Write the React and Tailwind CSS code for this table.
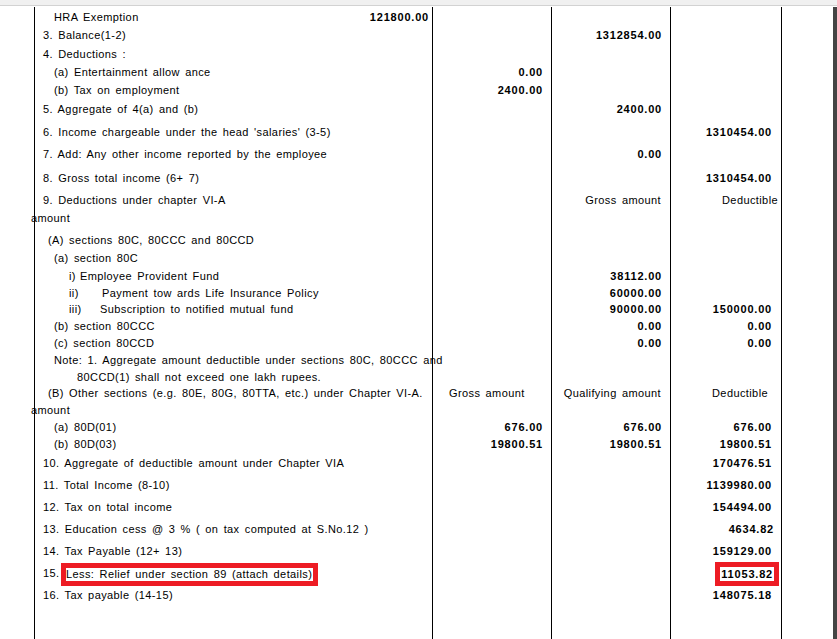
import React from 'react';

// left margin | label | col B | col C | col D | spare
const GRID = 'grid grid-cols-[34px_398px_119px_119px_111px_52px]';

const H = {
  16: 'h-[16px]',
  17: 'h-[17px]',
  18: 'h-[18px]',
  19: 'h-[19px]',
  22: 'h-[22px]',
  23: 'h-[23px]',
  24: 'h-[24px]',
};

// label start positions
const IND = {
  n: 'pl-[8px]', // numbered items
  s: 'pl-[13px]', // (A) / (B)
  a: 'pl-[19px]', // (a) (b) ...
  r: 'pl-[34px]', // roman sub items
  w: 'pl-[42px]', // note wrap line
  o: '-ml-[4px]', // "amount" spill-over
};

const rows = [
  { h: 18, label: 'HRA Exemption', ind: 'a', inl: '121800.00' },
  { h: 19, label: '3. Balance(1-2)', ind: 'n', c: '1312854.00' },
  { h: 18, label: '4. Deductions :', ind: 'n' },
  { h: 18, label: '(a) Entertainment allow ance', ind: 'a', b: '0.00' },
  { h: 19, label: '(b) Tax on employment', ind: 'a', b: '2400.00' },
  { h: 23, label: '5. Aggregate of 4(a) and (b)', ind: 'n', c: '2400.00' },
  { h: 22, label: "6. Income chargeable under the head 'salaries' (3-5)", ind: 'n', d: '1310454.00' },
  { h: 24, label: '7. Add: Any other income reported by the employee', ind: 'n', c: '0.00' },
  { h: 22, label: '8. Gross total income (6+ 7)', ind: 'n', d: '1310454.00' },
  {
    h: 18,
    label: '9. Deductions under chapter VI-A',
    ind: 'n',
    ch: <span className="pr-[9px]">Gross amount</span>,
    dh: <span className="pr-[3px]">Deductible</span>,
  },
  { h: 22, label: 'amount', ind: 'o' },
  { h: 18, label: '(A) sections 80C, 80CCC and 80CCD', ind: 's' },
  { h: 18, label: '(a) section 80C', ind: 'a' },
  { h: 17, roman: ['i)', 'Employee Provident Fund'], rw: 'w-[1px]', ind: 'r', c: '38112.00' },
  { h: 16, roman: ['ii)', 'Payment tow ards Life Insurance Policy'], rw: 'w-[33px]', ind: 'r', c: '60000.00' },
  { h: 17, roman: ['iii)', 'Subscription to notified mutual fund'], rw: 'w-[31px]', ind: 'r', c: '90000.00', d: '150000.00' },
  { h: 17, label: '(b) section 80CCC', ind: 'a', c: '0.00', d: '0.00' },
  { h: 17, label: '(c) section 80CCD', ind: 'a', c: '0.00', d: '0.00' },
  { h: 17, label: 'Note: 1. Aggregate amount deductible under sections 80C, 80CCC and', ind: 'a' },
  { h: 16, label: '80CCD(1) shall not exceed one lakh rupees.', ind: 'w' },
  {
    h: 17,
    label: '(B) Other sections (e.g. 80E, 80G, 80TTA, etc.) under Chapter VI-A.',
    ind: 's',
    bh: <span className="mr-auto pl-[16px]">Gross amount</span>,
    ch: <span className="pr-[9px]">Qualifying amount</span>,
    dh: <span className="pr-[13px]">Deductible</span>,
  },
  { h: 17, label: 'amount', ind: 'o' },
  { h: 17, label: '(a) 80D(01)', ind: 'a', b: '676.00', c: '676.00', d: '676.00' },
  { h: 19, label: '(b) 80D(03)', ind: 'a', b: '19800.51', c: '19800.51', d: '19800.51' },
  { h: 22, label: '10. Aggregate of deductible amount under Chapter VIA', ind: 'n', d: '170476.51' },
  { h: 22, label: '11. Total Income (8-10)', ind: 'n', d: '1139980.00' },
  { h: 22, label: '12. Tax on total income', ind: 'n', d: '154494.00' },
  { h: 22, label: '13. Education cess @ 3 % ( on tax computed at S.No.12 )', ind: 'n', d: '4634.82', dpr: 'pr-[7px]' },
  { h: 22, label: '14. Tax Payable (12+ 13)', ind: 'n', d: '159129.00' },
  { h: 22, relief: true },
  { h: 22, label: '16. Tax payable (14-15)', ind: 'n', d: '148075.18' },
];

function Num({ v, head, pr = 'pr-[8px]' }) {
  return (
    <div className="border-l border-black pt-[3px] leading-[14px] flex justify-end whitespace-nowrap">
      {head}
      {v && <span className={`${pr} font-bold tracking-[0.8px]`}>{v}</span>}
    </div>
  );
}

function Row({ r }) {
  if (r.relief) {
    return (
      <div className={`${GRID} ${H[r.h]}`}>
        <div />
        <div className="border-l border-black flex items-start whitespace-nowrap pl-[8px]">
          <span className="w-[18px] pt-[3px] leading-[14px]">15.</span>
          <span className="inline-block w-[257px] border-[5px] border-[#ed1c24] leading-[13px]">
            Less: Relief under section 89 (attach details)
          </span>
        </div>
        <div className="border-l border-black" />
        <div className="border-l border-black" />
        <div className="border-l border-black flex justify-end items-start pr-[2px]">
          <span className="-mt-[1px] w-[64px] border-[5px] border-[#ed1c24] leading-[14px] text-right pr-[1px] font-bold tracking-[0.8px]">
            11053.82
          </span>
        </div>
        <div className="border-l border-black" />
      </div>
    );
  }

  return (
    <div className={`${GRID} ${H[r.h]}`}>
      <div />
      <div className="border-l border-black pt-[3px] leading-[14px] flex justify-between whitespace-nowrap pr-[3px]">
        {r.roman ? (
          <span className={`${IND[r.ind]} flex`}>
            <span className={r.rw === 'w-[1px]' ? 'pr-[4px]' : r.rw}>{r.roman[0]}</span>
            <span>{r.roman[1]}</span>
          </span>
        ) : (
          <span className={IND[r.ind]}>{r.label}</span>
        )}
        {r.inl && <span className="font-bold tracking-[0.8px]">{r.inl}</span>}
      </div>
      <Num v={r.b} head={r.bh} />
      <Num v={r.c} head={r.ch} pr="pr-[8px]" />
      <Num v={r.d} head={r.dh} pr={r.dpr || 'pr-[9px]'} />
      <div className="border-l border-black" />
    </div>
  );
}

export default function App() {
  return (
    <div className="h-screen w-full overflow-hidden flex flex-col bg-white text-black text-[11px] font-['Liberation_Sans',Arial,sans-serif] tracking-[0.4px] [word-spacing:1.8px]">
      <div className="h-[6px] shrink-0 bg-[#f0f0f0] border-b border-[#d2d2d2]" />
      <div className="flex-1 min-h-0 flex pt-[1px]">
        <div className="flex-1 flex flex-col">
          {rows.map((r, i) => (
            <Row key={i} r={r} />
          ))}
          <div className={`${GRID} flex-1`}>
            <div />
            <div className="border-l border-black" />
            <div className="border-l border-black" />
            <div className="border-l border-black" />
            <div className="border-l border-black" />
            <div className="border-l border-black" />
          </div>
        </div>
        <div className="w-[4px] bg-[#444444]" />
      </div>
    </div>
  );
}
